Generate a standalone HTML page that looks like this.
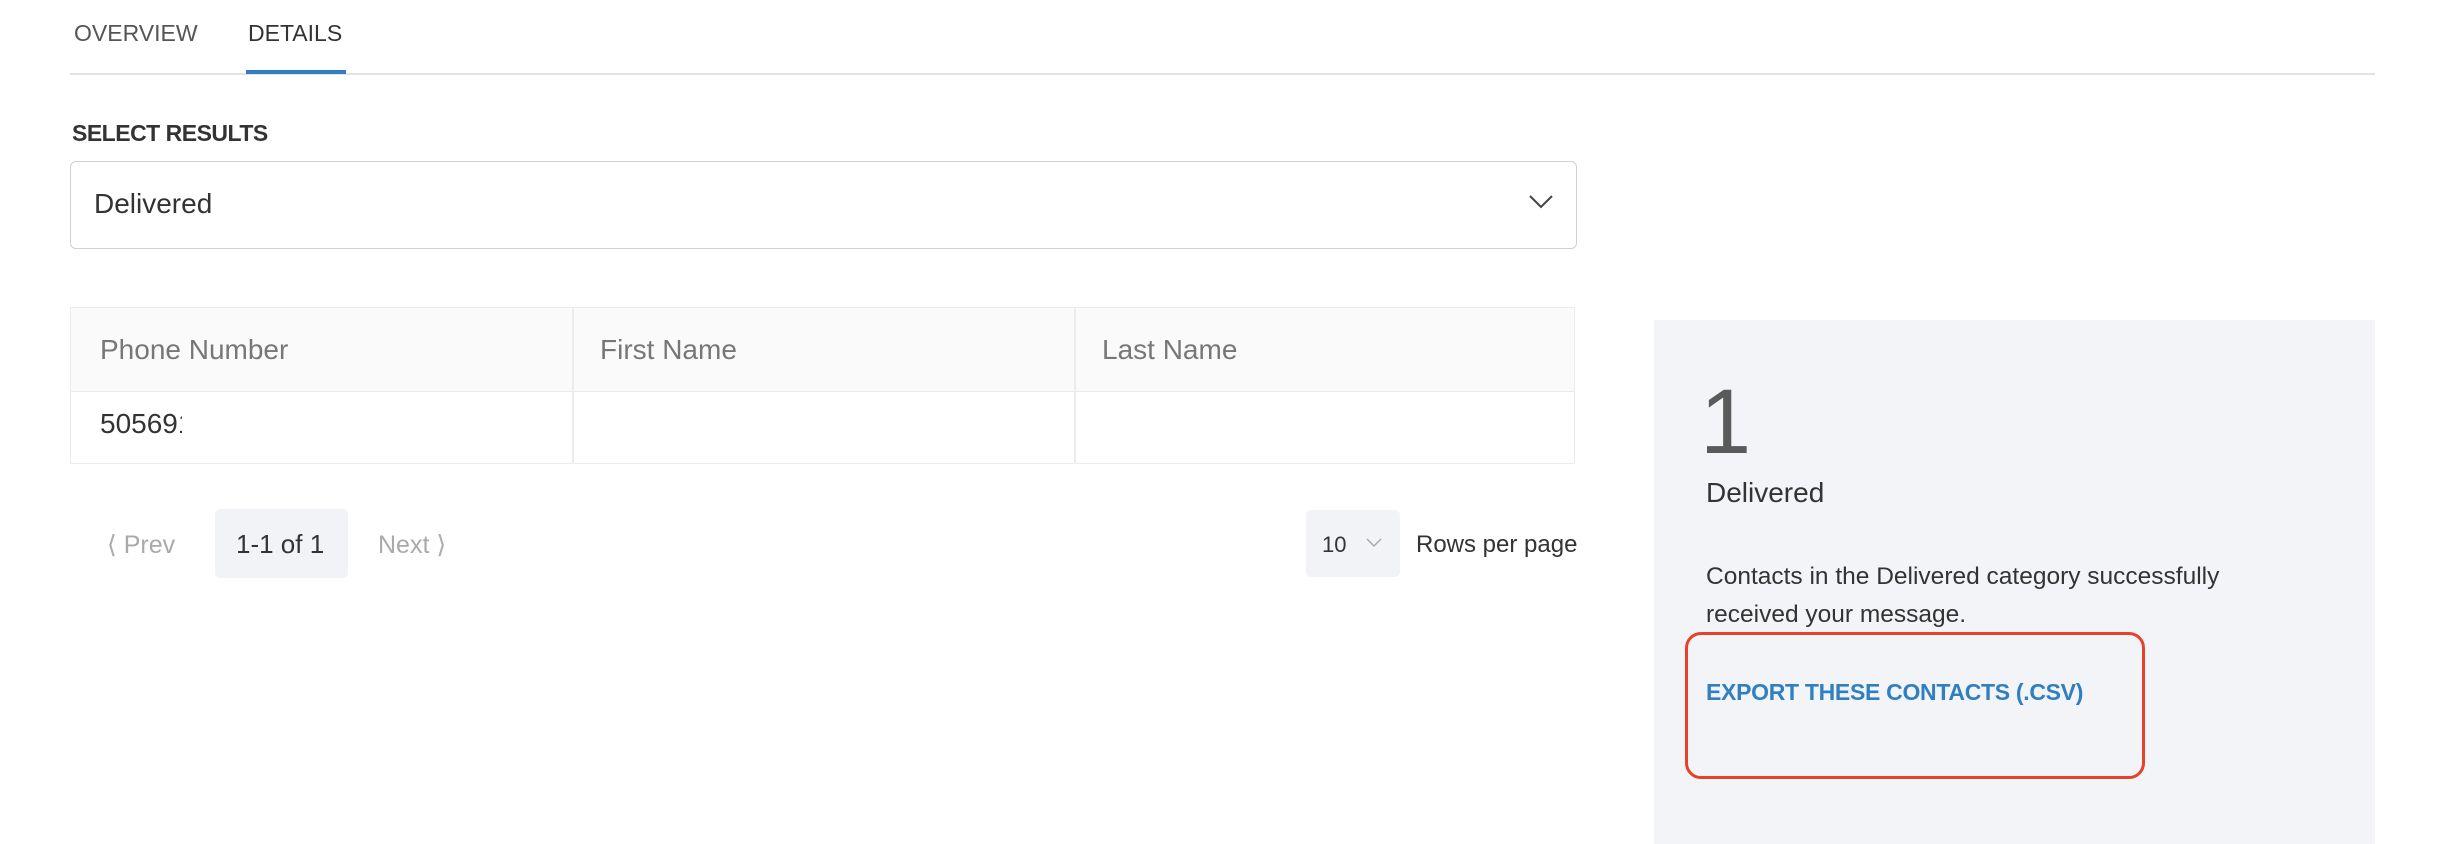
<!DOCTYPE html>
<html><head><meta charset="utf-8"><style>
*{margin:0;padding:0;box-sizing:border-box}
body{width:2458px;height:844px;background:#fff;font-family:"Liberation Sans",sans-serif;color:#333;position:relative;overflow:hidden}
.a{position:absolute;white-space:nowrap}
</style></head><body>
<div class="a" style="left:74px;top:20px;font-size:23px;color:#555">OVERVIEW</div>
<div class="a" style="left:248px;top:20px;font-size:23px;color:#333">DETAILS</div>
<div class="a" style="left:70px;top:73px;width:2305px;height:2px;background:#e3e3e3"></div>
<div class="a" style="left:246px;top:70px;width:100px;height:4px;background:#2f7fc1"></div>
<div class="a" style="left:72px;top:120px;font-size:23px;font-weight:bold;color:#333;letter-spacing:-0.5px">SELECT RESULTS</div>
<div class="a" style="left:70px;top:161px;width:1507px;height:88px;border:1.5px solid #d0d0d0;border-radius:6px"></div>
<div class="a" style="left:94px;top:188px;font-size:28px;color:#333">Delivered</div>
<svg class="a" style="left:1528px;top:194px" width="26" height="16" viewBox="0 0 26 16"><path d="M2 2 L13 13 L24 2" fill="none" stroke="#444" stroke-width="2"/></svg>
<div class="a" style="left:70px;top:307px;width:1505px;height:157px;border:1.5px solid #ececec"></div>
<div class="a" style="left:71px;top:308px;width:1503px;height:84px;background:#fafafa;border-bottom:1.5px solid #ececec"></div>
<div class="a" style="left:572px;top:308px;width:1.5px;height:155px;background:#ececec"></div>
<div class="a" style="left:1074px;top:308px;width:1.5px;height:155px;background:#ececec"></div>
<div class="a" style="left:100px;top:334px;font-size:28px;color:#777">Phone Number</div>
<div class="a" style="left:600px;top:334px;font-size:28px;color:#777">First Name</div>
<div class="a" style="left:1102px;top:334px;font-size:28px;color:#777">Last Name</div>
<div class="a" style="left:100px;top:408px;font-size:28px;color:#333">50569<span style="display:inline-block;width:4px;overflow:hidden;vertical-align:top">1</span></div>
<div class="a" style="left:107px;top:530px;font-size:25px;color:#aaa">&#10216; Prev</div>
<div class="a" style="left:215px;top:509px;width:133px;height:69px;background:#f2f3f6;border-radius:5px"></div>
<div class="a" style="left:236px;top:529px;font-size:26px;color:#333">1-1 of 1</div>
<div class="a" style="left:378px;top:530px;font-size:25px;color:#aaa">Next &#10217;</div>
<div class="a" style="left:1306px;top:510px;width:94px;height:67px;background:#f2f3f6;border-radius:5px"></div>
<div class="a" style="left:1322px;top:532px;font-size:22px;color:#333">10</div>
<svg class="a" style="left:1366px;top:538px" width="16" height="10" viewBox="0 0 16 10"><path d="M1 1 L8 8 L15 1" fill="none" stroke="#aaa" stroke-width="1.5"/></svg>
<div class="a" style="left:1416px;top:531px;font-size:24px;color:#333">Rows per page</div>
<div class="a" style="left:1654px;top:320px;width:721px;height:524px;background:#f3f4f7"></div>
<div class="a" style="left:1700px;top:376px;font-size:92px;color:#5a5a5a;line-height:1">1</div>
<div class="a" style="left:1706px;top:477px;font-size:28px;color:#333">Delivered</div>
<div class="a" style="left:1706px;top:558px;font-size:24.5px;color:#333;line-height:38px">Contacts in the Delivered category successfully<br>received your message.</div>
<div class="a" style="left:1685px;top:632px;width:460px;height:147px;border:3px solid #e8412b;border-radius:16px"></div>
<div class="a" style="left:1706px;top:679px;font-size:23px;font-weight:bold;color:#2f7fc1;letter-spacing:-0.3px">EXPORT THESE CONTACTS (.CSV)</div>
</body></html>
